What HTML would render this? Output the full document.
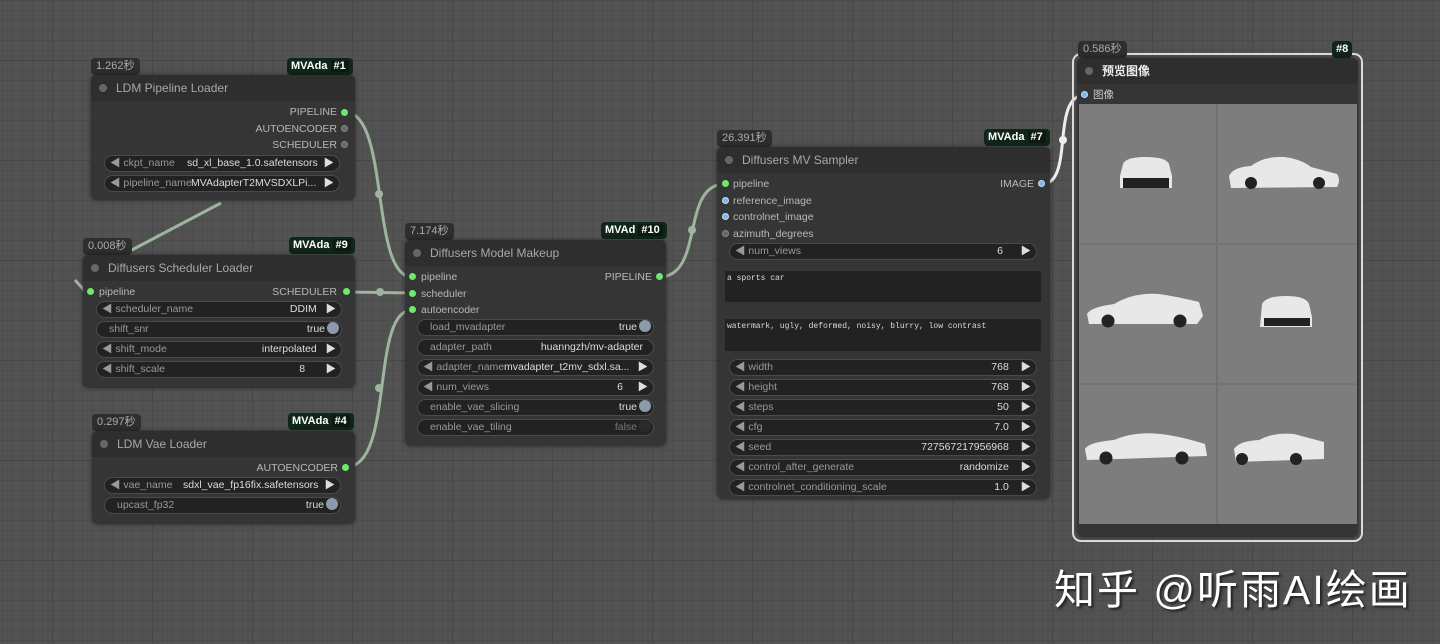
<!DOCTYPE html>
<html><head><meta charset="utf-8"><style>
*{margin:0;padding:0;box-sizing:border-box}
body{width:1440px;height:644px;overflow:hidden;position:relative;font-family:"Liberation Sans","Noto Sans CJK SC",sans-serif;
background-color:#525252;
background-image:linear-gradient(#474747 1px,transparent 1px),linear-gradient(90deg,#474747 1px,transparent 1px),linear-gradient(rgba(0,0,0,.07) 1px,transparent 1px),linear-gradient(90deg,rgba(0,0,0,.07) 1px,transparent 1px);
background-size:100px 100px,100px 100px,10px 10px,10px 10px;background-position:52px -40px,52px -40px,2px 0,2px 0}
.a{position:absolute}
.node{position:absolute;background:#353535;border-radius:6px;box-shadow:0 0 4px rgba(0,0,0,.5)}
.tt{position:absolute;left:0;right:0;top:0;height:26px;background:#2e2e2e;border-radius:6px 6px 0 0;color:#a8a8a8;font-size:12px;line-height:26px;padding-left:25px}
.tt:before{content:"";position:absolute;left:8px;top:9px;width:8px;height:8px;border-radius:50%;background:#666}
.tm{position:absolute;height:17px;background:#2e2e2e;border-radius:4px;color:#aaa;font-size:11px;line-height:17px;padding:0 5px}
.bd{position:absolute;height:17px;background:#10261a;border-radius:4px;color:#fff;font-size:11px;font-weight:bold;line-height:17px;padding:0 4px}
.o{position:absolute;font-size:10.5px;color:#b8b8b8;line-height:14px}
.dot{position:absolute;width:7px;height:7px;border-radius:50%}
.g{background:#6ee86e}.gr{background:#666;border:1px solid #888}.b{background:#7ab8f0;border:1px solid #cde}
.w{position:absolute;height:17px;background:#222;border:1px solid #4a4a4a;border-radius:9px;font-size:10.5px;line-height:15px;color:#999;white-space:nowrap;overflow:hidden}
.w .l{position:absolute;left:5px}
.w .v{position:absolute;right:5px;color:#ddd}
.tog{display:inline-block;width:12px;height:12px;border-radius:50%;background:#8c9aab;vertical-align:-2px;margin-left:2px}
.ta{position:absolute;background:#222;color:#ddd;font-family:"Liberation Mono",monospace;font-size:8px;padding:3px 2px}
.wire{fill:none;stroke:#9db59d;stroke-width:3}
</style></head><body>
<svg class="a" style="left:0;top:0" width="1440" height="644">
<path class="wire" d="M345 112 C390 112,370 277,412 277"/>
<circle cx="379" cy="194" r="4" fill="#9db59d"/>
<path class="wire" d="M221 203 L128 252"/>
<path class="wire" d="M346 292 L412 293"/>
<circle cx="380" cy="292" r="4" fill="#9db59d"/>
<path class="wire" d="M346 467 C395 467,370 310,412 310"/>
<circle cx="379" cy="388" r="4" fill="#9db59d"/>
<path class="wire" d="M659 277 C705 277,680 184,725 184"/>
<circle cx="692" cy="230" r="4" fill="#9db59d"/>
<path d="M1042 184 C1075 184,1050 95,1085 95" fill="none" stroke="#eee" stroke-width="3"/>
<circle cx="1063" cy="140" r="4" fill="#eee"/>
<path class="wire" d="M75 280 L84 290"/>
</svg>

<!-- node 1 -->
<div class="tm" style="left:91px;top:58px">1.262秒</div>
<div class="bd" style="left:287px;top:58px">MVAda <span style="background:#0b1a10;padding:0 3px">#1</span></div>
<div class="node" style="left:91px;top:75px;width:264px;height:125px"><div class="tt">LDM Pipeline Loader</div></div>
<div class="o" style="right:1103px;top:105px">PIPELINE</div><div class="dot g" style="left:341px;top:109px"></div>
<div class="o" style="right:1103px;top:122px">AUTOENCODER</div><div class="dot gr" style="left:341px;top:125px"></div>
<div class="o" style="right:1103px;top:138px">SCHEDULER</div><div class="dot gr" style="left:341px;top:141px"></div>
<div class="w" style="left:104px;top:155px;width:236px"><span class="l">◀ ckpt_name</span><span class="v" style="right:auto;left:82px">sd_xl_base_1.0.safetensors</span><span class="v">▶</span></div>
<div class="w" style="left:104px;top:175px;width:236px"><span class="l">◀ pipeline_name</span><span class="v" style="right:auto;left:86px">MVAdapterT2MVSDXLPi...</span><span class="v">▶</span></div>

<!-- node 9 -->
<div class="tm" style="left:83px;top:238px">0.008秒</div>
<div class="bd" style="left:289px;top:237px">MVAda <span style="background:#0b1a10;padding:0 3px">#9</span></div>
<div class="node" style="left:83px;top:255px;width:272px;height:133px"><div class="tt">Diffusers Scheduler Loader</div></div>
<div class="dot g" style="left:87px;top:288px"></div><div class="o" style="left:99px;top:285px">pipeline</div>
<div class="o" style="right:1103px;top:285px">SCHEDULER</div><div class="dot g" style="left:343px;top:288px"></div>
<div class="w" style="left:96px;top:301px;width:246px"><span class="l">◀ scheduler_name</span><span class="v">DDIM &nbsp;&nbsp;▶</span></div>
<div class="w" style="left:96px;top:321px;width:246px"><span class="l" style="left:12px">shift_snr</span><span class="v" style="right:2px">true<span class="tog"></span></span></div>
<div class="w" style="left:96px;top:341px;width:246px"><span class="l">◀ shift_mode</span><span class="v">interpolated &nbsp;&nbsp;▶</span></div>
<div class="w" style="left:96px;top:361px;width:246px"><span class="l">◀ shift_scale</span><span class="v">8 &nbsp;&nbsp;&nbsp;&nbsp;&nbsp;&nbsp;▶</span></div>

<!-- node 4 -->
<div class="tm" style="left:92px;top:414px">0.297秒</div>
<div class="bd" style="left:288px;top:413px">MVAda <span style="background:#0b1a10;padding:0 3px">#4</span></div>
<div class="node" style="left:92px;top:431px;width:263px;height:93px"><div class="tt">LDM Vae Loader</div></div>
<div class="o" style="right:1102px;top:461px">AUTOENCODER</div><div class="dot g" style="left:342px;top:464px"></div>
<div class="w" style="left:104px;top:477px;width:237px"><span class="l">◀ vae_name</span><span class="v" style="right:auto;left:78px">sdxl_vae_fp16fix.safetensors</span><span class="v">▶</span></div>
<div class="w" style="left:104px;top:497px;width:237px"><span class="l" style="left:12px">upcast_fp32</span><span class="v" style="right:2px">true<span class="tog"></span></span></div>

<!-- node 10 -->
<div class="tm" style="left:405px;top:223px">7.174秒</div>
<div class="bd" style="left:601px;top:222px">MVAd <span style="background:#0b1a10;padding:0 3px">#10</span></div>
<div class="node" style="left:405px;top:240px;width:261px;height:206px"><div class="tt">Diffusers Model Makeup</div></div>
<div class="dot g" style="left:409px;top:273px"></div><div class="o" style="left:421px;top:270px">pipeline</div>
<div class="o" style="right:788px;top:270px">PIPELINE</div><div class="dot g" style="left:656px;top:273px"></div>
<div class="dot g" style="left:409px;top:290px"></div><div class="o" style="left:421px;top:287px">scheduler</div>
<div class="dot g" style="left:409px;top:306px"></div><div class="o" style="left:421px;top:303px">autoencoder</div>
<div class="w" style="left:417px;top:319px;width:237px"><span class="l" style="left:12px">load_mvadapter</span><span class="v" style="right:2px">true<span class="tog"></span></span></div>
<div class="w" style="left:417px;top:339px;width:237px"><span class="l" style="left:12px">adapter_path</span><span class="v" style="right:10px">huanngzh/mv-adapter</span></div>
<div class="w" style="left:417px;top:359px;width:237px"><span class="l">◀ adapter_name</span><span class="v" style="right:auto;left:86px">mvadapter_t2mv_sdxl.sa...</span><span class="v">▶</span></div>
<div class="w" style="left:417px;top:379px;width:237px"><span class="l">◀ num_views</span><span class="v">6 &nbsp;&nbsp;&nbsp;&nbsp;▶</span></div>
<div class="w" style="left:417px;top:399px;width:237px"><span class="l" style="left:12px">enable_vae_slicing</span><span class="v" style="right:2px">true<span class="tog"></span></span></div>
<div class="w" style="left:417px;top:419px;width:237px"><span class="l" style="left:12px">enable_vae_tiling</span><span class="v" style="right:2px;color:#777">false<span class="tog" style="background:#2a2a2a"></span></span></div>

<!-- node 7 -->
<div class="tm" style="left:717px;top:130px">26.391秒</div>
<div class="bd" style="left:984px;top:129px">MVAda <span style="background:#0b1a10;padding:0 3px">#7</span></div>
<div class="node" style="left:717px;top:147px;width:333px;height:352px"><div class="tt">Diffusers MV Sampler</div></div>
<div class="dot g" style="left:722px;top:180px"></div><div class="o" style="left:733px;top:177px">pipeline</div>
<div class="o" style="right:406px;top:177px">IMAGE</div><div class="dot b" style="left:1038px;top:180px"></div>
<div class="dot b" style="left:722px;top:197px"></div><div class="o" style="left:733px;top:194px">reference_image</div>
<div class="dot b" style="left:722px;top:213px"></div><div class="o" style="left:733px;top:210px">controlnet_image</div>
<div class="dot gr" style="left:722px;top:230px"></div><div class="o" style="left:733px;top:227px">azimuth_degrees</div>
<div class="w" style="left:729px;top:243px;width:308px"><span class="l">◀ num_views</span><span class="v">6 &nbsp;&nbsp;&nbsp;&nbsp;&nbsp;▶</span></div>
<div class="ta" style="left:725px;top:271px;width:316px;height:31px">a sports car</div>
<div class="ta" style="left:725px;top:319px;width:316px;height:32px">watermark, ugly, deformed, noisy, blurry, low contrast</div>
<div class="w" style="left:729px;top:359px;width:308px"><span class="l">◀ width</span><span class="v">768 &nbsp;&nbsp;&nbsp;▶</span></div>
<div class="w" style="left:729px;top:379px;width:308px"><span class="l">◀ height</span><span class="v">768 &nbsp;&nbsp;&nbsp;▶</span></div>
<div class="w" style="left:729px;top:399px;width:308px"><span class="l">◀ steps</span><span class="v">50 &nbsp;&nbsp;&nbsp;▶</span></div>
<div class="w" style="left:729px;top:419px;width:308px"><span class="l">◀ cfg</span><span class="v">7.0 &nbsp;&nbsp;&nbsp;▶</span></div>
<div class="w" style="left:729px;top:439px;width:308px"><span class="l">◀ seed</span><span class="v">727567217956968 &nbsp;&nbsp;&nbsp;▶</span></div>
<div class="w" style="left:729px;top:459px;width:308px"><span class="l">◀ control_after_generate</span><span class="v">randomize &nbsp;&nbsp;&nbsp;▶</span></div>
<div class="w" style="left:729px;top:479px;width:308px"><span class="l">◀ controlnet_conditioning_scale</span><span class="v">1.0 &nbsp;&nbsp;&nbsp;▶</span></div>

<!-- node 8 -->
<div class="a" style="left:1072px;top:53px;width:291px;height:489px;border:2px solid #ddd;border-radius:9px"></div>
<div class="tm" style="left:1078px;top:41px">0.586秒</div>
<div class="bd" style="left:1332px;top:41px">#8</div>
<div class="node" style="left:1077px;top:58px;width:281px;height:479px;background:#353535">
<div class="tt" style="color:#eee;font-weight:bold">预览图像</div>
</div>
<div class="dot b" style="left:1081px;top:91px"></div><div class="o" style="left:1093px;top:88px;color:#ccc">图像</div>
<div class="a" style="left:1079px;top:104px;width:278px;height:420px;background:#7d7d7d"></div>
<div class="a" style="left:1216px;top:104px;width:2px;height:420px;background:#707070"></div>
<div class="a" style="left:1079px;top:243px;width:278px;height:2px;background:#747474"></div>
<div class="a" style="left:1079px;top:383px;width:278px;height:2px;background:#747474"></div>
<svg class="a" style="left:1079px;top:104px" width="278" height="420">
<g fill="#e8e8e8">
<path d="M44 60 Q47 53 67 53 Q87 53 90 60 L93 72 L93 84 L41 84 L41 72 Z"/>
<path d="M150 72 Q154 63 172 62 Q185 52 205 53 Q222 55 232 63 L258 70 Q262 76 258 83 L152 84 Z"/>
<path d="M8 210 Q12 203 35 200 Q55 188 80 190 Q95 192 120 198 L124 212 L118 220 L10 220 Z"/>
<path d="M183 200 Q187 192 207 192 Q227 192 230 200 L233 213 L233 223 L181 223 Z"/>
<path d="M6 345 Q10 338 35 336 Q55 327 82 330 Q100 332 126 340 L128 352 L8 356 Z"/>
<path d="M155 345 Q160 337 180 336 Q195 328 215 330 L245 338 L245 355 L157 358 Z"/>
</g>
<g fill="#222">
<rect x="44" y="74" width="46" height="10"/>
<circle cx="172" cy="79" r="6"/><circle cx="240" cy="79" r="6"/>
<circle cx="29" cy="217" r="6.5"/><circle cx="101" cy="217" r="6.5"/>
<rect x="185" y="214" width="46" height="8"/>
<circle cx="27" cy="354" r="6.5"/><circle cx="103" cy="354" r="6.5"/>
<circle cx="163" cy="355" r="6"/><circle cx="217" cy="355" r="6"/>
</g>
</svg>

<div class="a" style="left:1054px;top:556px;font-size:41px;color:#fff;text-shadow:2px 2px 2px #222;font-family:'Liberation Sans','Noto Sans CJK SC',sans-serif;white-space:nowrap;letter-spacing:2px">知乎 @听雨AI绘画</div>
</body></html>
